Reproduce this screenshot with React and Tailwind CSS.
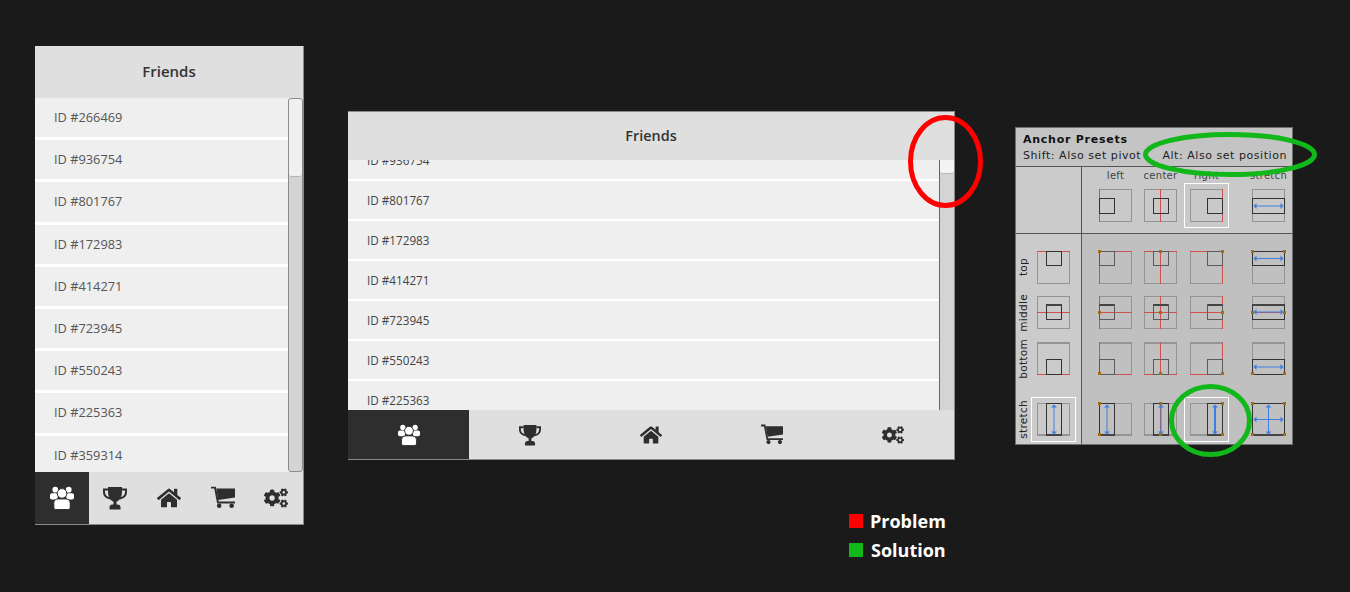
import { FaHome, FaCogs } from "react-icons/fa";

const UsersIcon = ({ size }) => (
  <svg width={size} height={size} viewBox="0 0 25 24" fill="currentColor">
    <circle cx="5.5" cy="3.4" r="3" />
    <circle cx="19.5" cy="3.4" r="3" />
    <rect x="0" y="7" width="8" height="6.5" rx="2" />
    <rect x="17" y="7" width="8" height="6.5" rx="2" />
    <circle cx="12.5" cy="7.2" r="5" stroke="#2e2e2e" />
    <path d="M4 22v-4.500q0-4.500 4.500-4.500h8q4.500 0 4.500 4.500v4.500q0 2-2 2h-13q-2 0-2-2z" stroke="#2e2e2e" />
  </svg>
);

const TrophyIcon = ({ size }) => (
  <svg width={size} height={size} viewBox="0 0 24 23" fill="currentColor">
    <path d="M5 0.5h14v5q0 7-5 9.500h-4q-5-2.500-5-9.500z" />
    <path d="M5 3H1v2.500q0 5 6 6.500M19 3h4v2.500q0 5-6 6.500" fill="none" stroke="currentColor" strokeWidth="2" />
    <rect x="10.500" y="14" width="3" height="4.500" />
    <path d="M6.500 23v-2q0-3 3-3h5q3 0 3 3v2z" />
  </svg>
);

const CartIcon = ({ size }) => (
  <svg width={size} height={size} viewBox="0 0 25 24" fill="currentColor">
    <path d="M5.500 2H25v9.500L7.500 14z" />
    <path d="M0 1.200h4.200l3 15.500H25" fill="none" stroke="currentColor" strokeWidth="2" />
    <circle cx="8.500" cy="20" r="2.400" />
    <circle cx="21.500" cy="20" r="2.400" />
  </svg>
);

const tabIcons = [UsersIcon, TrophyIcon, FaHome, CartIcon, FaCogs];

const tallIds = ["266469", "936754", "801767", "172983", "414271", "723945", "550243", "225363", "359314"];
const wideIds = ["936754", "801767", "172983", "414271", "723945", "550243", "225363"];

const TabBar = ({ iconSize, height }) => (
  <div className={`flex bg-[#dfdfdf] ${height}`}>
    {tabIcons.map((Icon, i) => (
      <div
        key={i}
        className={`flex-1 flex items-center justify-center ${i === 0 ? "bg-[#2e2e2e] text-white" : "text-[#2e2e2e]"}`}
      >
        <Icon size={iconSize} />
      </div>
    ))}
  </div>
);

const xRange = { left: [0.5, 15.5], center: [9.5, 24.5], right: [17.5, 32.5], stretch: [0.5, 32.5], none: [9.5, 24.5] };
const yRange = { top: [0.5, 14.5], middle: [8.5, 23.5], bottom: [17.5, 32.5], stretch: [0.5, 32.5], none: [9.5, 24.5] };
const redX = { left: 0.5, center: 16.5, right: 32.5 };
const redY = { top: 0.5, middle: 16.5, bottom: 32.5 };
const pinX = { left: [-1], center: [15], right: [31], stretch: [-1, 31] };
const pinY = { top: [-1], middle: [15], bottom: [30], stretch: [-1, 30] };

const AnchorIcon = ({ h = "none", v = "none", pins = false, selected = false, bold = false }) => {
  const [x0, x1] = xRange[h];
  const [y0, y1] = yRange[v];
  const cx = (x0 + x1) / 2;
  const cy = (y0 + y1) / 2;
  const full = h === "stretch" || v === "stretch";
  return (
    <div className="relative w-[33px] h-[33px]">
      <svg width="33" height="33" viewBox="0 0 33 33" className="block overflow-visible">
        <rect x="0.5" y="0.5" width="32" height="32" fill="none" stroke="#949494" />
        {v === "bottom" && <path d="M0 1h33" stroke="#949494" strokeWidth="2" />}
        {v === "stretch" && <path d="M0 32h33" stroke="#949494" strokeWidth="2" />}
        {h in redX && <path d={`M${redX[h]} 0v33`} stroke="#d0504e" />}
        {v in redY && <path d={`M0 ${redY[v]}h33`} stroke="#d0504e" />}
        <rect
          x={x0}
          y={y0}
          width={x1 - x0}
          height={y1 - y0}
          fill="none"
          stroke={pins && !full ? "#5a5a5a" : "#333"}
        />
        {v === "middle" && <path d={`M${x0} ${y0 + 0.5}H${x1}`} stroke="#444" strokeWidth="2" />}
        {v === "stretch" && <path d={`M${x0} 32H${x1}`} stroke="#444" strokeWidth="2" />}
        {h === "stretch" && (
          <g fill="#3d7fe0">
            <path d={`M${x0 + 3} ${cy}H${x1 - 3}`} stroke="#3d7fe0" />
            <path d={`M${x0 + 1} ${cy}l3-3v6z`} />
            <path d={`M${x1 - 1} ${cy}l-3-3v6z`} />
          </g>
        )}
        {v === "stretch" && (
          <g fill="#3d7fe0">
            <path d={`M${cx} ${y0 + 3}V${y1 - 3}`} stroke="#3d7fe0" strokeWidth={bold ? 2 : 1} />
            <path d={`M${cx} ${y0 + 1}l-3 3h6z`} />
            <path d={`M${cx} ${y1 - 1}l-3-3h6z`} />
          </g>
        )}
        {pins &&
          pinX[h].map((px) =>
            pinY[v].map((py) => (
              <rect key={`${px}-${py}`} x={px} y={py} width="3" height="3" fill="#a36e10" />
            ))
          )}
      </svg>
      {selected && <div className="absolute -left-[6px] -top-[6px] w-[45px] h-[45px] border border-white"></div>}
    </div>
  );
};

const AnchorPresets = () => {
  const cols = ["left", "center", "right", "stretch"];
  const rows = ["top", "middle", "bottom", "stretch"];
  return (
    <div className="w-[278px] border border-[#6e6e6e] bg-[#c0c0c0] text-[#222] font-['DejaVu_Sans',sans-serif]">
      <div className="h-[39px] bg-[#c4c4c4] border-b border-[#555] pl-[7px] pr-[5px] pt-[4px]">
        <div className="text-[11px] leading-[15px] font-bold tracking-[0.75px] text-[#111]">Anchor Presets</div>
        <div className="flex justify-between text-[11px] leading-[17px] tracking-[0.55px]">
          <span>Shift: Also set pivot</span>
          <span>Alt: Also set position</span>
        </div>
      </div>

      <div className="flex h-[67px] bg-[#c9c9c9] border-b border-[#555]">
        <div className="w-[66px] bg-[#cbcbcb] border-r border-[#555]"></div>
        <div className="pl-[17px] grid grid-cols-[45px_46px_62px_33px]">
          {cols.map((c) => (
            <div key={c} className="w-[33px] flex flex-col items-center">
              <div className="h-[22px] pt-[2px] text-[10px] leading-[14px] tracking-[0.3px] text-[#444] whitespace-nowrap">{c}</div>
              <AnchorIcon h={c} selected={c === "right"} />
            </div>
          ))}
        </div>
      </div>

      <div className="flex">
        <div className="w-[66px] bg-[#cbcbcb] border-r border-[#555] pt-[17px] pb-[8px] grid grid-rows-[45px_46px_61px_33px]">
          {rows.map((r) => (
            <div key={r} className="flex h-[33px] items-center">
              <div className="w-[14px] mr-[7px] flex justify-center">
                <span className="[writing-mode:vertical-rl] rotate-180 text-[10.500px] leading-[14px] tracking-[0.3px] whitespace-nowrap">{r}</span>
              </div>
              <AnchorIcon v={r} selected={r === "stretch"} />
            </div>
          ))}
        </div>
        <div className="pl-[17px] pt-[17px] pb-[8px] grid grid-cols-[45px_46px_62px_33px] grid-rows-[45px_46px_61px_33px]">
          {rows.map((r) =>
            cols.map((c) => (
              <AnchorIcon
                key={`${r}-${c}`}
                h={c}
                v={r}
                pins
                selected={r === "stretch" && c === "right"}
                bold={r === "stretch" && c === "right"}
              />
            ))
          )}
        </div>
      </div>
    </div>
  );
};

export default function App() {
  return (
    <div className="relative w-[1350px] h-[592px] overflow-hidden bg-[#1a1a1a] font-['Open_Sans',sans-serif]">
      <div className="flex items-start pl-[35px]">
        {/* tall phone */}
        <div className="w-[269px] mt-[46px] border-b border-r border-[#8a8a8a]">
          <div className="h-[52px] pb-[2px] bg-[#dfdfdf] flex items-center justify-center text-[15px] font-semibold text-[#333]">
            Friends
          </div>
          <div className="relative h-[374px] overflow-hidden bg-white">
            {tallIds.map((id) => (
              <div key={id} className="h-[39.2px] mb-[3px] bg-[#efefef] flex items-center pl-[19px] text-[12.800px] text-[#555]">
                ID #{id}
              </div>
            ))}
            <div className="absolute right-0 top-0 bottom-0 w-[15px] bg-[#d4d4d4] border border-[#8c8c8c] rounded-[3px]">
              <div className="h-[78px] bg-[#f0f0f0] border-b border-[#b5b5b5] rounded-[3px]"></div>
            </div>
          </div>
          <TabBar iconSize={24} height="h-[52px]" />
        </div>

        {/* wide layout */}
        <div className="w-[607px] ml-[44px] mt-[111px]">
          <div className="border-t border-r border-b border-[#8a8a8a]">
            <div className="h-[48px] bg-[#dfdfdf] flex items-center justify-center text-[14.400px] font-semibold text-[#333]">
              Friends
            </div>
            <div className="relative h-[250px] overflow-hidden bg-white">
              <div className="-mt-[19px]">
                {wideIds.map((id) => (
                  <div key={id} className="h-[38px] mb-[2px] pt-[1px] bg-[#efefef] flex items-center pl-[19px] text-[11.700px] text-[#444]">
                    ID #{id}
                  </div>
                ))}
              </div>
              <div className="absolute right-0 top-0 bottom-0 w-[15px] bg-[#d4d4d4] border-l border-[#666]">
                <div className="h-[14px] bg-[#f4f4f4] border-b border-[#b5b5b5] rounded-b-[3px]"></div>
              </div>
            </div>
            <TabBar iconSize={22} height="h-[49px]" />
          </div>

          <div className="ml-[501px] mt-[50px] flex flex-col gap-[7px] text-[18px] leading-[22px] font-bold text-white whitespace-nowrap">
            <div className="flex items-center gap-[7px]">
              <span className="w-[14px] h-[14px] bg-[#ff0000]"></span>
              Problem
            </div>
            <div className="flex items-center gap-[8px]">
              <span className="w-[14px] h-[14px] bg-[#12b81a]"></span>
              Solution
            </div>
          </div>
        </div>

        <div className="ml-[60px] mt-[127px]">
          <AnchorPresets />
        </div>
      </div>

      {/* annotations drawn over the screenshots */}
      <svg width="1350" height="592" className="absolute left-0 top-0 pointer-events-none" fill="none" strokeWidth="5">
        <ellipse cx="945.5" cy="161.5" rx="35" ry="44" stroke="#ff0000" />
        <ellipse cx="1230" cy="154.5" rx="84.500" ry="20" stroke="#12b81a" />
        <ellipse cx="1210.5" cy="420.5" rx="39" ry="34" stroke="#12b81a" />
      </svg>
    </div>
  );
}
